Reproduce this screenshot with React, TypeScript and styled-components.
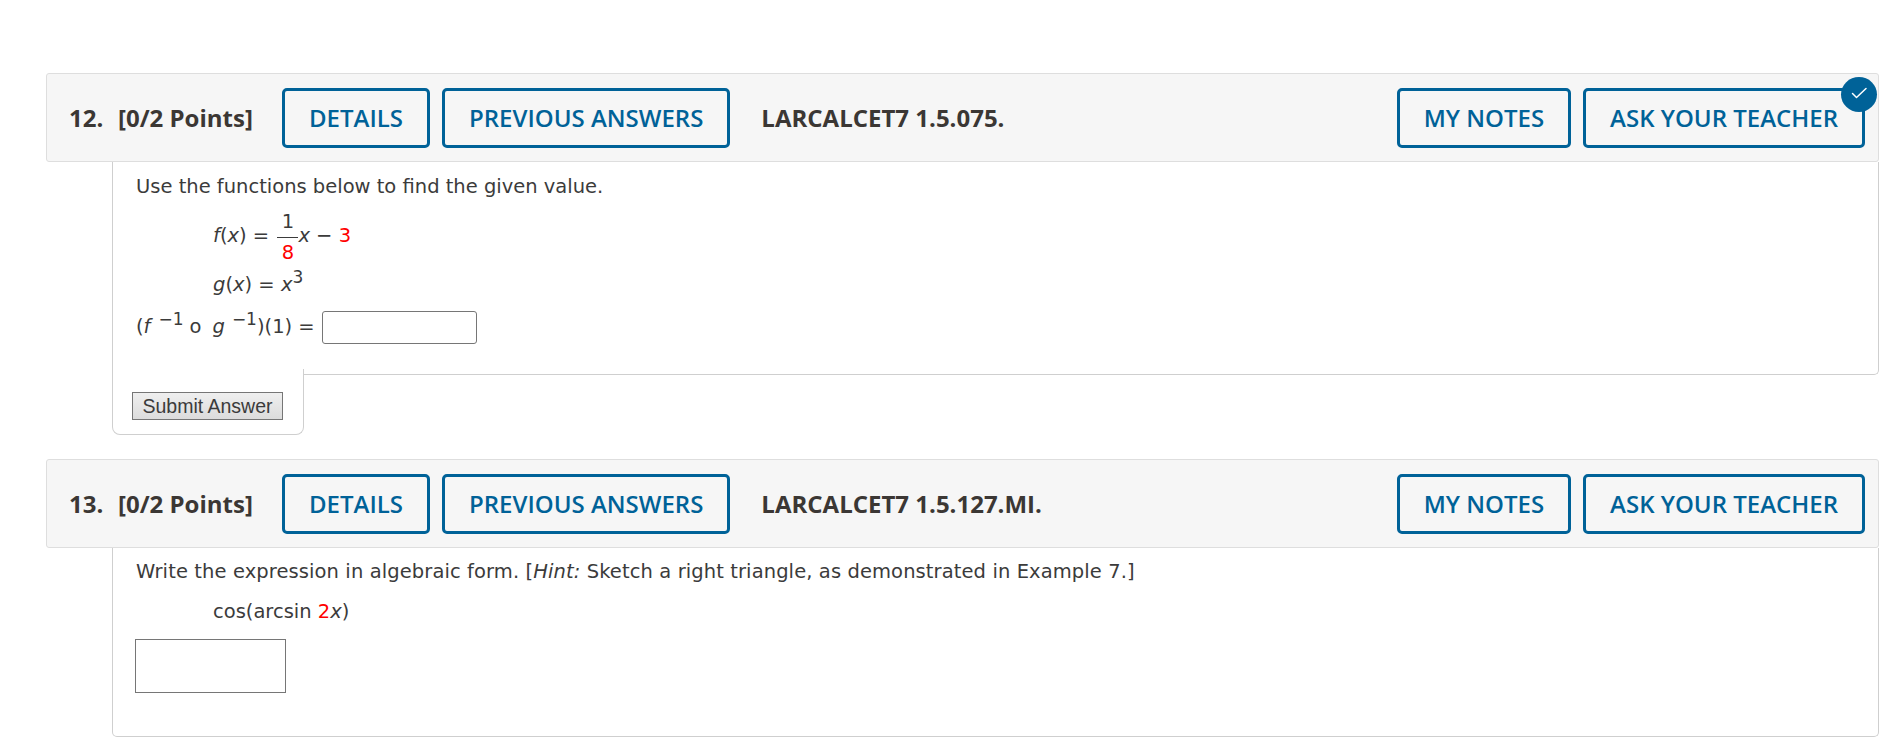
import React from "react";
import styled, { createGlobalStyle } from "styled-components";

const Global = createGlobalStyle`
  html, body { margin: 0; padding: 0; background: #fff; }
  body { font-family: "DejaVu Sans", Verdana, sans-serif; color: #3b3b3b; }
`;

const Page = styled.main`
  padding: 73px 8px 0 46px;
  display: flex;
  flex-direction: column;
  width: 1833px;
`;

const Question = styled.section`
  display: flex;
  flex-direction: column;
  margin-bottom: 24px;
`;

const Header = styled.header`
  position: relative;
  display: flex;
  align-items: center;
  height: 89px;
  box-sizing: border-box;
  padding: 0 13px 0 22px;
  background: #f6f6f6;
  border: 1px solid #dedede;
  border-radius: 3px;
  font-family: "Open Sans", sans-serif;
`;

const Number = styled.span`
  font-size: 24px;
  font-weight: 700;
  color: #3b3734;
  width: 49px;
`;

const Points = styled.span`
  font-size: 24px;
  font-weight: 700;
  color: #3b3734;
  width: 164px;
  white-space: nowrap;
`;

const ActionButton = styled.button<{ $last?: boolean }>`
  height: 60px;
  box-sizing: border-box;
  padding: 0 24px;
  margin-right: ${(p) => (p.$last ? 0 : 12)}px;
  background: transparent;
  border: 3px solid #006298;
  border-radius: 5px;
  color: #006298;
  font-family: "Open Sans", sans-serif;
  font-size: 24px;
  font-weight: 600;
  white-space: nowrap;
`;

const Code = styled.span`
  margin-left: 19px;
  font-size: 24px;
  font-weight: 700;
  color: #3b3734;
  flex: 1;
`;

const Badge = styled.span`
  position: absolute;
  top: 3px;
  right: 1px;
  width: 36px;
  height: 35px;
  border-radius: 50%;
  background: #006298;
  display: flex;
  align-items: center;
  justify-content: center;
`;

const CheckIcon = styled.svg`
  margin-bottom: 3px;
`;

const Body = styled.div<{ $h: number; $top: number }>`
  margin-left: 66px;
  box-sizing: border-box;
  height: ${(p) => p.$h}px;
  padding: ${(p) => p.$top}px 18px 0 23px;
  border: 1px solid #cfcfcf;
  border-top: none;
  border-radius: 0 0 5px 5px;
  font-size: 19.5px;
  line-height: 26px;
  background: #fff;
  display: flex;
  flex-direction: column;
`;

const SubmitTab = styled.div`
  margin-left: 66px;
  margin-top: -6px;
  width: 192px;
  height: 66px;
  box-sizing: border-box;
  padding: 23px 0 0 20px;
  background: #fff;
  border: 1px solid #cfcfcf;
  border-top: none;
  border-radius: 0 0 8px 8px;
  position: relative;
`;

const SubmitButton = styled.button`
  display: block;
  width: 151px;
  height: 28px;
  margin-left: -1px;
  box-sizing: border-box;
  padding: 0;
  background: linear-gradient(#efefef, #dcdcdc);
  border: 1px solid #767676;
  color: #3b3b3b;
  font-family: "Liberation Sans", Arial, sans-serif;
  font-size: 19.5px;
`;

const Line = styled.div<{ $mb?: number; $spacing?: number }>`
  white-space: nowrap;
  margin-bottom: ${(p) => p.$mb ?? 0}px;
  letter-spacing: ${(p) => p.$spacing ?? 0}px;
`;

const Formula = styled.div<{ $h: number; $indent?: number; $mb?: number }>`
  display: flex;
  align-items: center;
  white-space: pre;
  height: ${(p) => p.$h}px;
  padding-left: ${(p) => p.$indent ?? 0}px;
  margin-bottom: ${(p) => p.$mb ?? 0}px;
`;

const Var = styled.i``;
const Red = styled.span`
  color: #f00;
`;

const Fraction = styled.span`
  display: inline-flex;
  flex-direction: column;
  align-items: center;
  width: 21px;
  margin: 4px 0 0 2px;
  line-height: 30px;
`;

const Numerator = styled.span`
  display: block;
  width: 100%;
  height: 28px;
  line-height: 26px;
  text-align: center;
  border-bottom: 1px solid #3b3b3b;
`;

const Sup = styled.span<{ $gap?: number }>`
  font-size: 17px;
  line-height: 0;
  position: relative;
  top: -8px;
  margin-left: ${(p) => p.$gap ?? 0}px;
`;

const Compose = styled.span`
  margin: 0 11px 0 6px;
`;

const ShortInput = styled.input`
  width: 155px;
  height: 33px;
  box-sizing: border-box;
  margin-left: 7px;
  background: #fff;
  border: 1px solid #767676;
  border-radius: 3px;
`;

const WideInput = styled.input`
  display: block;
  width: 151px;
  height: 54px;
  margin-left: -1px;
  box-sizing: border-box;
  background: #fff;
  border: 1px solid #767676;
  border-radius: 0;
`;

const Check = () => (
  <CheckIcon width="18" height="18" viewBox="0 0 18 18" fill="none" stroke="#fff" strokeWidth="1.5" strokeLinecap="round" strokeLinejoin="round">
    <path d="M2.5 9.5 L6.5 13.5 L16 4.5" />
  </CheckIcon>
);

const QuestionHeader = ({ n, code, done }: { n: string; code: string; done?: boolean }) => (
  <Header>
    <Number>{n}</Number>
    <Points>[0/2 Points]</Points>
    <ActionButton>DETAILS</ActionButton>
    <ActionButton>PREVIOUS ANSWERS</ActionButton>
    <Code>{code}</Code>
    <ActionButton>MY NOTES</ActionButton>
    <ActionButton $last>ASK YOUR TEACHER</ActionButton>
    {done && (
      <Badge>
        <Check />
      </Badge>
    )}
  </Header>
);

export default function App() {
  return (
    <Page>
      <Global />
      <Question>
        <QuestionHeader n="12." code="LARCALCET7 1.5.075." done />
        <Body $h={213} $top={12}>
          <Line $mb={7}>Use the functions below to find the given value.</Line>
          <Formula $h={58} $indent={77} $mb={2}>
            <Var>f</Var>(<Var>x</Var>) = <Fraction><Numerator>1</Numerator><Red>8</Red></Fraction><Var>x</Var> − <Red>3</Red>
          </Formula>
          <Formula $h={36} $indent={77} $mb={6}>
            <Var>g</Var>(<Var>x</Var>) = <Var>x</Var><Sup>3</Sup>
          </Formula>
          <Formula $h={36}>
            (<Var>f</Var><Sup $gap={8}>−1</Sup><Compose>o</Compose><Var>g</Var><Sup $gap={7}>−1</Sup>)(1) =<ShortInput />
          </Formula>
        </Body>
        <SubmitTab>
          <SubmitButton>Submit Answer</SubmitButton>
        </SubmitTab>
      </Question>
      <Question>
        <QuestionHeader n="13." code="LARCALCET7 1.5.127.MI." />
        <Body $h={189} $top={11}>
          <Line $mb={14} $spacing={0.1}>
            Write the expression in algebraic form. [<Var>Hint:</Var> Sketch a right triangle, as demonstrated in Example 7.]
          </Line>
          <Formula $h={26} $indent={77} $mb={14}>
            cos(arcsin <Red>2</Red><Var>x</Var>)
          </Formula>
          <WideInput />
        </Body>
      </Question>
    </Page>
  );
}
